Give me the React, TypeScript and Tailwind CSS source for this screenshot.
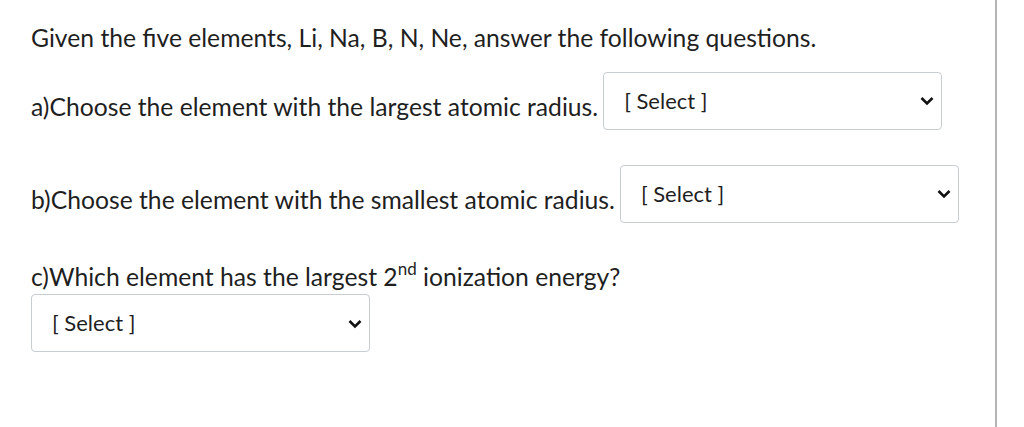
import React from 'react';

function SelectBox({ className = '' }: { className?: string }) {
  return (
    <div
      className={`flex h-[58px] w-[339px] items-center justify-between rounded-[4px] border border-[#c7cdd1] bg-white pl-[20px] pr-[6px] ${className}`}
    >
      <span className="text-[22px] leading-none text-[#1f1f1f]">[ Select ]</span>
      <svg width="16" height="10" viewBox="0 0 16 10" className="mt-[1px]">
        <path d="M2.5 2 L8 7.5 L13.5 2" fill="none" stroke="#111" strokeWidth="2.6" />
      </svg>
    </div>
  );
}

export default function App() {
  return (
    <div className="h-[427px] w-[1024px] bg-white" style={{ fontFamily: 'Lato, "Open Sans", sans-serif' }}>
      <div className="h-full w-[997px] border-r-2 border-[#b5b5b5] pl-[31px] pt-[23px] text-[24.7px] leading-[1.2] text-[#1f1f1f]">
        <p>Given the five elements, Li, Na, B, N, Ne, answer the following questions.</p>

        {/* a */}
        <div className="mt-[19px] flex items-end gap-[5px]">
          <span className="mb-[8px]">a)Choose the element with the largest atomic radius.</span>
          <SelectBox />
        </div>

        {/* b */}
        <div className="mt-[35px] flex items-end gap-[5px]">
          <span className="mb-[8px]">b)Choose the element with the smallest atomic radius.</span>
          <SelectBox />
        </div>

        {/* c */}
        <p className="mt-[39px]">
          c)Which element has the largest 2<sup className="top-[-0.6em] text-[17px]">nd</sup> ionization energy?
        </p>
        <SelectBox className="mt-[3px]" />
      </div>
    </div>
  );
}
